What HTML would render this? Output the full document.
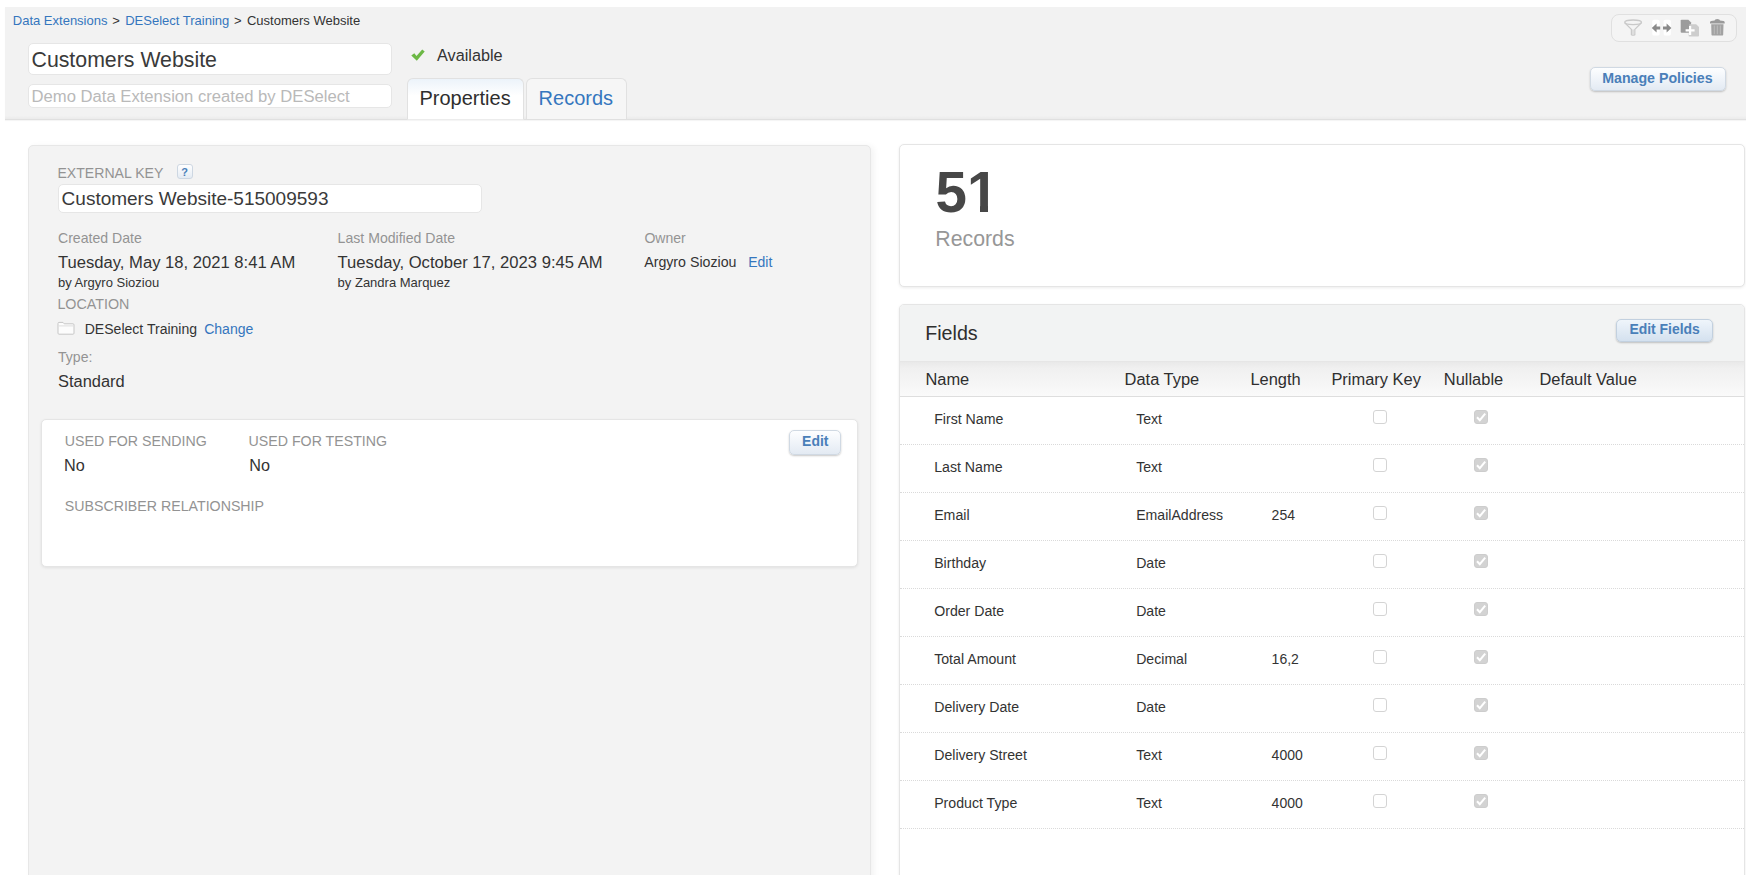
<!DOCTYPE html>
<html lang="en">
<head>
<meta charset="utf-8">
<title>Customers Website - Data Extension</title>
<style>
*{box-sizing:border-box;margin:0;padding:0}
html,body{width:1746px;height:880px;overflow:hidden;background:#fff}
body{font-family:"Liberation Sans",Arial,sans-serif;color:#333;position:relative}
.t{position:absolute;white-space:nowrap;line-height:20px}
.abs{position:absolute}
a,.lnk{color:#3576be;text-decoration:none}
#hdr{position:absolute;left:4.5px;top:7px;width:1742px;height:113px;background:linear-gradient(#f2f2f2 97%,#ebebeb);border-bottom:1px solid #e0e0e0;box-shadow:0 1px 1px rgba(0,0,0,.04)}
.inp{position:absolute;background:#fff;border:1px solid #e6e6e6;border-radius:5px}
.btn{position:absolute;border:1px solid #d0d9e3;border-radius:5px;background:linear-gradient(#fdfeff,#e3eaf3);box-shadow:0 1px 2px rgba(0,0,0,.22)}
.btn.b2{background:linear-gradient(#eff5fb,#d4e1ef);border-color:#c2d0df}
.tab{position:absolute;border:1px solid #e1e1e1;border-bottom:none;border-radius:6px 6px 0 0}
#left{position:absolute;left:28px;top:144.5px;width:843px;height:740px;background:#f3f3f3;border:1px solid #e7e7e7;border-radius:5px;box-shadow:3px 1px 6px rgba(0,0,0,.05)}
.card{position:absolute;background:#fff;border:1px solid #e5e5e5;border-radius:5px;box-shadow:0 1px 3px rgba(0,0,0,.08)}
.rl{position:absolute;left:900px;width:844px;height:0;border-top:1px dotted #dadada}
.cb{position:absolute;width:14px;height:14px;border:1px solid #d4d4d4;border-radius:3px;background:#fff}
.cb.on{background:#d3d3d3;border-color:#cdcdcd}
.cb svg{position:absolute;left:0;top:0}
</style>
</head>
<body>
<div id="hdr"></div>
<div class="t" style="left:12.8px;top:11.00px;font-size:13px;color:#333;"><a>Data Extensions</a><span style="margin:0 1.8px 0 1.1px"> &gt; </span><a>DESelect Training</a><span style="margin:0 1.8px 0 1.1px"> &gt; </span>Customers Website</div>
<div class="inp" style="left:27.5px;top:43px;width:364px;height:32px"></div>
<div class="t" style="left:31.5px;top:49.50px;font-size:21.3px;color:#3a3a3a;">Customers Website</div>
<div class="inp" style="left:27.5px;top:84px;width:364px;height:24px"></div>
<div class="t" style="left:31.5px;top:86.50px;font-size:16.65px;color:#b9b9b9;">Demo Data Extension created by DESelect</div>
<svg class="abs" style="left:410px;top:48px" width="16" height="14" viewBox="0 0 16 14"><path d="M1.3 7.6 L4.3 5.2 L6.5 8 L12.2 1.5 L14.7 3.5 L6.8 12.8 Z" fill="#6cb845"/></svg>
<div class="t" style="left:437px;top:44.80px;font-size:16.25px;color:#333;">Available</div>
<div class="tab" style="left:407px;top:78px;width:117px;height:42px;background:linear-gradient(#ecf3fa,#fff 42%);border-bottom:1px solid #ececec"></div>
<div class="t" style="left:419.5px;top:88.10px;font-size:20px;color:#2e2e2e;">Properties</div>
<div class="tab" style="left:526px;top:78px;width:101px;height:41px;background:#f6f6f6"></div>
<div class="t" style="left:538.6px;top:88.10px;font-size:20px;color:#3576be;">Records</div>
<div class="abs" style="left:1611px;top:14px;width:126px;height:28px;border:1px solid #e0e0e0;border-radius:8px;background:#f4f4f4"></div>
<svg class="abs" style="left:1620px;top:16px" width="110" height="24" viewBox="1620 16 110 24">
<g fill="none" stroke="#c9c9c9" stroke-width="1.3"><ellipse cx="1633.1" cy="22.3" rx="8.4" ry="2.3"/><path d="M1624.8 22.8 L1631.4 29.4 L1631.4 34.6 Q1633.1 35.6 1634.8 34.6 L1634.8 29.4 L1641.4 22.8"/></g>
<path d="M1632 29.5 L1634.3 29.5 L1634.3 34.5 L1632 34.5 Z" fill="#dedede"/>
<rect x="1652.3" y="19.7" width="7.3" height="15.9" rx="1.6" fill="#fff"/><rect x="1663.6" y="19.7" width="7.3" height="15.9" rx="1.6" fill="#fff"/>
<path d="M1651.8 28 L1656.6 23.6 L1656.6 26.5 L1660.2 26.5 L1660.2 29.5 L1656.6 29.5 L1656.6 32.4 Z" fill="#8a8a8a"/>
<path d="M1671.4 28 L1666.6 23.6 L1666.6 26.5 L1663 26.5 L1663 29.5 L1666.6 29.5 L1666.6 32.4 Z" fill="#8a8a8a"/>
<path d="M1681.6 19.7 L1688.4 19.7 L1691.1 22.4 L1691.1 32.7 L1681.6 32.7 Q1680.7 32.7 1680.7 31.8 L1680.7 20.6 Q1680.7 19.7 1681.6 19.7 Z" fill="#9c9c9c"/>
<path d="M1689.5 24.3 L1696.2 24.3 L1699 27.1 L1699 35.5 Q1699 36.4 1698.1 36.4 L1689.5 36.4 Q1688.6 36.4 1688.6 35.5 Z" fill="#cdcdcd"/>
<path d="M1685.6 29.3 L1689 29.3 L1689 25.9 L1691.2 25.9 L1691.2 29.3 L1694.6 29.3 L1694.6 31.5 L1691.2 31.5 L1691.2 34.9 L1689 34.9 L1689 31.5 L1685.6 31.5 Z" fill="#fff"/>
<path d="M1714.6 20.6 Q1714.6 18.9 1717.3 18.9 Q1720 18.9 1720 20.6 L1723.6 20.9 Q1724.7 21.1 1724.7 22.2 L1724.7 23.4 L1710 23.4 L1710 22.2 Q1710 21.1 1711.1 20.9 Z" fill="#9a9a9a"/>
<path d="M1711.2 24.2 L1723.5 24.2 L1723.2 34.4 Q1723.1 35.6 1721.9 35.6 L1712.8 35.6 Q1711.6 35.6 1711.5 34.4 Z" fill="#a2a2a2"/>
<g stroke="#b9b9b9" stroke-width="1.1"><path d="M1714.3 25.6 L1714.3 34.2"/><path d="M1717.35 25.6 L1717.35 34.2"/><path d="M1720.4 25.6 L1720.4 34.2"/></g>
</svg>

<div class="btn" style="left:1590px;top:67px;width:136px;height:24px"></div>
<div class="t" style="left:1602.2px;top:67.90px;font-size:14.2px;color:;font-weight:bold;color:#4a7fb9">Manage Policies</div>
<div id="left"></div>
<div class="t" style="left:57.4px;top:162.80px;font-size:14.1px;color:#939393;">EXTERNAL KEY</div>
<div class="abs" style="left:176.7px;top:164px;width:16px;height:15px;border:1px solid #cdd7e2;border-radius:3px;background:linear-gradient(#fff,#e4ebf3)"></div>
<div class="t" style="left:181.2px;top:161.60px;font-size:11px;color:;font-weight:bold;color:#4a7fb9">?</div>
<div class="inp" style="left:57.8px;top:184px;width:424px;height:29px"></div>
<div class="t" style="left:61.6px;top:188.60px;font-size:19px;color:#3a3a3a;">Customers Website-515009593</div>
<div class="t" style="left:58px;top:228.20px;font-size:14.1px;color:#939393;">Created Date</div>
<div class="t" style="left:58px;top:252.50px;font-size:16.62px;color:#333;">Tuesday, May 18, 2021 8:41 AM</div>
<div class="t" style="left:58px;top:272.90px;font-size:13px;color:#333;">by Argyro Sioziou</div>
<div class="t" style="left:57.4px;top:293.95px;font-size:14.3px;color:#939393;">LOCATION</div>
<svg class="abs" style="left:57.4px;top:321.4px" width="18" height="14.4" viewBox="0 0 18 14.4"><path d="M1 2.4 Q1 1.4 2 1.4 L6 1.4 L7.2 2.8 L16 2.8 Q17 2.8 17 3.8 L17 12.2 Q17 13.2 16 13.2 L2 13.2 Q1 13.2 1 12.2 Z" fill="#fcfcfc" stroke="#c6c6c6" stroke-width="1"/><path d="M1.5 4.9 L16.5 4.9" stroke="#dedede" stroke-width="1"/></svg>
<div class="t" style="left:84.7px;top:318.50px;font-size:14.05px;color:#333;">DESelect Training<span class="lnk" style="margin-left:7px">Change</span></div>
<div class="t" style="left:58px;top:346.60px;font-size:14.05px;color:#939393;">Type:</div>
<div class="t" style="left:58px;top:370.65px;font-size:16.45px;color:#333;">Standard</div>
<div class="t" style="left:337.6px;top:228.20px;font-size:14.1px;color:#939393;">Last Modified Date</div>
<div class="t" style="left:337.6px;top:252.50px;font-size:16.62px;color:#333;">Tuesday, October 17, 2023 9:45 AM</div>
<div class="t" style="left:337.6px;top:272.90px;font-size:13px;color:#333;">by Zandra Marquez</div>
<div class="t" style="left:644.4px;top:228.20px;font-size:14.05px;color:#939393;">Owner</div>
<div class="t" style="left:644.2px;top:252.40px;font-size:14.2px;color:#333;">Argyro Sioziou<span class="lnk" style="margin-left:11.8px;font-size:14px">Edit</span></div>
<div class="card" style="left:41px;top:419px;width:817px;height:148px"></div>
<div class="t" style="left:64.8px;top:430.50px;font-size:14.2px;color:#939393;">USED FOR SENDING</div>
<div class="t" style="left:64.1px;top:454.70px;font-size:16.2px;color:#333;">No</div>
<div class="t" style="left:248.6px;top:430.50px;font-size:14.2px;color:#939393;">USED FOR TESTING</div>
<div class="t" style="left:249.2px;top:454.70px;font-size:16.2px;color:#333;">No</div>
<div class="t" style="left:64.8px;top:495.95px;font-size:14.2px;color:#939393;">SUBSCRIBER RELATIONSHIP</div>
<div class="btn" style="left:789.2px;top:430.2px;width:51.5px;height:24.8px"></div>
<div class="t" style="left:802.1px;top:431.10px;font-size:13.95px;color:;font-weight:bold;color:#4a7fb9">Edit</div>
<div class="card" style="left:899.4px;top:144.4px;width:845.6px;height:142.4px"></div>
<div class="t" style="left:935.5px;top:162.60px;font-size:56.5px;color:#474747;font-weight:bold;line-height:60px">51</div>
<div class="abs" style="left:968px;top:206px;width:12px;height:7px;background:#fff"></div><div class="abs" style="left:988px;top:206px;width:11px;height:7px;background:#fff"></div>
<div class="t" style="left:935.3px;top:229.10px;font-size:21.3px;color:#979797;">Records</div>
<div class="card" style="left:899.4px;top:304.3px;width:845.6px;height:590px;overflow:hidden"><div style="position:absolute;left:0;top:0;width:100%;height:55.5px;background:#f2f3f3"></div><div style="position:absolute;left:0;top:55.5px;width:100%;height:36px;background:linear-gradient(#e9e9e9,#f0f0f0 18%,#fafafa);border-top:1px solid #e6e6e6;border-bottom:1px solid #dedede"></div></div>
<div class="t" style="left:925.2px;top:323.05px;font-size:19.7px;color:#2e2e2e;">Fields</div>
<div class="btn b2" style="left:1616px;top:318.8px;width:97.2px;height:23.6px"></div>
<div class="t" style="left:1629.4px;top:319.30px;font-size:13.95px;color:;font-weight:bold;color:#4a7fb9">Edit Fields</div>
<div class="t" style="left:925.4px;top:368.55px;font-size:16.45px;color:#2e2e2e;">Name</div>
<div class="t" style="left:1124.6px;top:368.55px;font-size:16.45px;color:#2e2e2e;">Data Type</div>
<div class="t" style="left:1250.4px;top:368.55px;font-size:16.45px;color:#2e2e2e;">Length</div>
<div class="t" style="left:1331.4px;top:368.55px;font-size:16.45px;color:#2e2e2e;">Primary Key</div>
<div class="t" style="left:1443.8px;top:368.55px;font-size:16.45px;color:#2e2e2e;">Nullable</div>
<div class="t" style="left:1539.4px;top:368.55px;font-size:16.45px;color:#2e2e2e;">Default Value</div>
<div class="t" style="left:934.2px;top:408.60px;font-size:14.15px;color:#333;">First Name</div>
<div class="t" style="left:1136.2px;top:408.60px;font-size:14.1px;color:#333;">Text</div>
<i class="cb" style="left:1372.6px;top:410.1px"></i>
<i class="cb on" style="left:1473.8px;top:410.1px"><svg width="12" height="12" viewBox="0 0 12 12"><path d="M2 6.2 L4.8 9.2 L10.2 2.6" fill="none" stroke="#fff" stroke-width="2"/></svg></i>
<div class="rl" style="top:443.8px"></div>
<div class="t" style="left:934.2px;top:456.60px;font-size:14.15px;color:#333;">Last Name</div>
<div class="t" style="left:1136.2px;top:456.60px;font-size:14.1px;color:#333;">Text</div>
<i class="cb" style="left:1372.6px;top:458.1px"></i>
<i class="cb on" style="left:1473.8px;top:458.1px"><svg width="12" height="12" viewBox="0 0 12 12"><path d="M2 6.2 L4.8 9.2 L10.2 2.6" fill="none" stroke="#fff" stroke-width="2"/></svg></i>
<div class="rl" style="top:491.8px"></div>
<div class="t" style="left:934.2px;top:504.60px;font-size:14.15px;color:#333;">Email</div>
<div class="t" style="left:1136.2px;top:504.60px;font-size:14.1px;color:#333;">EmailAddress</div>
<div class="t" style="left:1271.6px;top:504.60px;font-size:14px;color:#333;">254</div>
<i class="cb" style="left:1372.6px;top:506.1px"></i>
<i class="cb on" style="left:1473.8px;top:506.1px"><svg width="12" height="12" viewBox="0 0 12 12"><path d="M2 6.2 L4.8 9.2 L10.2 2.6" fill="none" stroke="#fff" stroke-width="2"/></svg></i>
<div class="rl" style="top:539.8px"></div>
<div class="t" style="left:934.2px;top:552.60px;font-size:14.15px;color:#333;">Birthday</div>
<div class="t" style="left:1136.2px;top:552.60px;font-size:14.1px;color:#333;">Date</div>
<i class="cb" style="left:1372.6px;top:554.1px"></i>
<i class="cb on" style="left:1473.8px;top:554.1px"><svg width="12" height="12" viewBox="0 0 12 12"><path d="M2 6.2 L4.8 9.2 L10.2 2.6" fill="none" stroke="#fff" stroke-width="2"/></svg></i>
<div class="rl" style="top:587.8px"></div>
<div class="t" style="left:934.2px;top:600.60px;font-size:14.15px;color:#333;">Order Date</div>
<div class="t" style="left:1136.2px;top:600.60px;font-size:14.1px;color:#333;">Date</div>
<i class="cb" style="left:1372.6px;top:602.1px"></i>
<i class="cb on" style="left:1473.8px;top:602.1px"><svg width="12" height="12" viewBox="0 0 12 12"><path d="M2 6.2 L4.8 9.2 L10.2 2.6" fill="none" stroke="#fff" stroke-width="2"/></svg></i>
<div class="rl" style="top:635.8px"></div>
<div class="t" style="left:934.2px;top:648.60px;font-size:14.15px;color:#333;">Total Amount</div>
<div class="t" style="left:1136.2px;top:648.60px;font-size:14.1px;color:#333;">Decimal</div>
<div class="t" style="left:1271.6px;top:648.60px;font-size:14px;color:#333;">16,2</div>
<i class="cb" style="left:1372.6px;top:650.1px"></i>
<i class="cb on" style="left:1473.8px;top:650.1px"><svg width="12" height="12" viewBox="0 0 12 12"><path d="M2 6.2 L4.8 9.2 L10.2 2.6" fill="none" stroke="#fff" stroke-width="2"/></svg></i>
<div class="rl" style="top:683.8px"></div>
<div class="t" style="left:934.2px;top:696.60px;font-size:14.15px;color:#333;">Delivery Date</div>
<div class="t" style="left:1136.2px;top:696.60px;font-size:14.1px;color:#333;">Date</div>
<i class="cb" style="left:1372.6px;top:698.1px"></i>
<i class="cb on" style="left:1473.8px;top:698.1px"><svg width="12" height="12" viewBox="0 0 12 12"><path d="M2 6.2 L4.8 9.2 L10.2 2.6" fill="none" stroke="#fff" stroke-width="2"/></svg></i>
<div class="rl" style="top:731.8px"></div>
<div class="t" style="left:934.2px;top:744.60px;font-size:14.15px;color:#333;">Delivery Street</div>
<div class="t" style="left:1136.2px;top:744.60px;font-size:14.1px;color:#333;">Text</div>
<div class="t" style="left:1271.6px;top:744.60px;font-size:14px;color:#333;">4000</div>
<i class="cb" style="left:1372.6px;top:746.1px"></i>
<i class="cb on" style="left:1473.8px;top:746.1px"><svg width="12" height="12" viewBox="0 0 12 12"><path d="M2 6.2 L4.8 9.2 L10.2 2.6" fill="none" stroke="#fff" stroke-width="2"/></svg></i>
<div class="rl" style="top:779.8px"></div>
<div class="t" style="left:934.2px;top:792.60px;font-size:14.15px;color:#333;">Product Type</div>
<div class="t" style="left:1136.2px;top:792.60px;font-size:14.1px;color:#333;">Text</div>
<div class="t" style="left:1271.6px;top:792.60px;font-size:14px;color:#333;">4000</div>
<i class="cb" style="left:1372.6px;top:794.1px"></i>
<i class="cb on" style="left:1473.8px;top:794.1px"><svg width="12" height="12" viewBox="0 0 12 12"><path d="M2 6.2 L4.8 9.2 L10.2 2.6" fill="none" stroke="#fff" stroke-width="2"/></svg></i>
<div class="rl" style="top:827.8px"></div>
<div class="abs" style="left:0;top:875px;width:1746px;height:5px;background:#fff"></div>
</body>
</html>
